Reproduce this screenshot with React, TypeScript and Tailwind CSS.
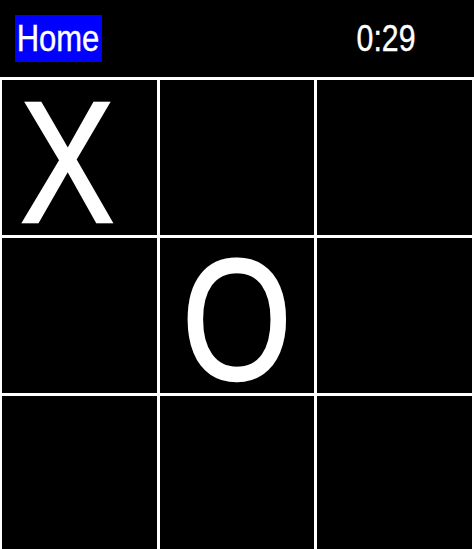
import React from 'react'

type Mark = 'X' | 'O' | ''

const board: Mark[] = ['X', '', '', '', 'O', '', '', '', '']

function Cell({ mark }: { mark: Mark }) {
  // glyphs in the watch screenshot are a bit condensed, so squeeze them horizontally
  return (
    <div
      className={`bg-black h-[155px] flex items-center justify-center ${
        mark === 'X' ? 'pr-[24px] pt-[9px]' : 'pt-[6px]'
      }`}
    >
      {mark && (
        <span className="inline-block text-white text-[172px] leading-none scale-x-[0.82] [-webkit-text-stroke:2.5px_white]">
          {mark}
        </span>
      )}
    </div>
  )
}

export default function App() {
  return (
    <div
      className="w-[474px] h-[549px] bg-black overflow-hidden"
      style={{ fontFamily: '"Liberation Sans", Arial, sans-serif' }}
    >
      {/* Header */}
      <div className="h-[77px] flex items-start pt-[15px]">
        <button className="ml-[15px] w-[87px] h-[47px] bg-[#0000ff] text-white text-[36px] leading-[47px] flex justify-center">
          <span className="inline-block scale-x-[0.86] [-webkit-text-stroke:0.4px_white]">Home</span>
        </button>
        <div className="ml-auto mr-[53px] w-[70px] h-[47px] text-white text-[36px] leading-[47px] text-center">
          <span className="inline-block scale-x-[0.84] [-webkit-text-stroke:0.4px_white]">0:29</span>
        </div>
      </div>

      {/* Board */}
      <div className="grid grid-cols-3 gap-[3px] bg-white px-[2px] pt-[3px]">
        {board.map((mark, i) => (
          <Cell key={i} mark={mark} />
        ))}
      </div>
    </div>
  )
}
